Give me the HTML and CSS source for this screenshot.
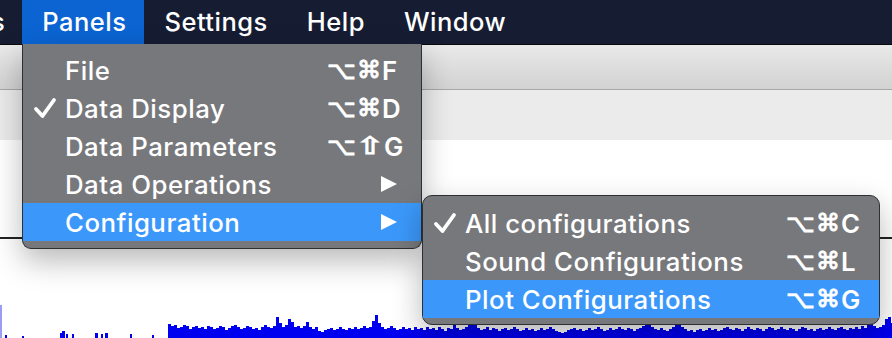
FILE: index.html
```html
<!DOCTYPE html>
<html>
<head>
<meta charset="utf-8">
<link rel="stylesheet" href="styles.css">
</head>
<body>
<div class="screen">
  <nav class="menubar">
    <span class="mb-item mb-cut">s</span>
    <span class="mb-item mb-active">Panels</span>
    <span class="mb-item">Settings</span>
    <span class="mb-item">Help</span>
    <span class="mb-item">Window</span>
  </nav>
  <div class="toolbar"></div>
  <div class="strip"></div>
  <div class="content">
    <div class="hline"></div>
    <div class="wave">
      <svg class="wave-svg" viewBox="0 298 892 40" width="892" height="40" preserveAspectRatio="none">
        <rect x="0" y="305" width="2" height="33" fill="#9a9cf5"/>
        <g fill="#0000f0">
          <rect x="5" y="335" width="2" height="3"/>
          <rect x="22" y="336" width="2" height="2"/>
          <rect x="60" y="333" width="2" height="5"/>
          <rect x="62" y="331" width="3" height="7"/>
          <rect x="66" y="334" width="2" height="4"/>
          <rect x="72" y="334" width="2" height="4"/>
          <rect x="95" y="333" width="3" height="5"/>
          <rect x="101" y="334" width="2" height="4"/>
          <rect x="105" y="333" width="3" height="5"/>
          <rect x="130" y="334" width="2" height="4"/>
          <rect x="152" y="335" width="2" height="3"/>
          <path d="M168 338 V324 H171 V326 H174 V325 H177 V328 H180 V327 H183 V325 H186 V326 H189 V329 H192 V327 H195 V326 H198 V328 H201 V327 H204 V329 H207 V326 H210 V327 H213 V329 H216 V328 H219 V326 H222 V327 H225 V330 H228 V328 H231 V326 H234 V325 H237 V327 H240 V329 H243 V328 H246 V326 H249 V327 H252 V329 H255 V328 H258 V330 H261 V327 H264 V325 H267 V327 H270 V328 H273 V326 H276 V317 H279 V323 H282 V327 H285 V325 H288 V319 H291 V322 H294 V327 H297 V326 H300 V328 H303 V326 H306 V322 H309 V327 H312 V329 H315 V327 H318 V331 H321 V332 H324 V330 H327 V329 H330 V328 H333 V330 H336 V329 H339 V327 H342 V329 H345 V330 H348 V328 H351 V329 H354 V327 H357 V329 H360 V328 H363 V326 H366 V328 H369 V327 H372 V321 H375 V315 H378 V323 H381 V327 H384 V329 H387 V328 H390 V326 H393 V328 H396 V330 H399 V329 H402 V327 H405 V329 H408 V328 H411 V330 H414 V327 H417 V329 H420 V328 H423 V330 H426 V327 H429 V329 H432 V328 H435 V330 H438 V327 H441 V329 H444 V331 H447 V328 H450 V329 H453 V325 H456 V328 H459 V330 H462 V329 H465 V327 H468 V323 H471 V322 H474 V325 H477 V328 H480 V330 H483 V329 H486 V327 H489 V330 H492 V328 H495 V329 H498 V331 H501 V329 H504 V328 H507 V330 H510 V329 H513 V327 H516 V329 H519 V331 H522 V330 H525 V328 H528 V330 H531 V329 H534 V331 H537 V330 H540 V328 H543 V330 H546 V329 H549 V327 H552 V329 H555 V331 H558 V332 H561 V333 H564 V332 H567 V330 H570 V329 H573 V328 H576 V330 H579 V329 H582 V331 H585 V330 H588 V328 H591 V330 H594 V329 H597 V327 H600 V329 H603 V331 H606 V330 H609 V328 H612 V330 H615 V329 H618 V327 H621 V329 H624 V330 H627 V328 H630 V329 H633 V331 H636 V329 H639 V328 H642 V326 H645 V325 H648 V323 H651 V327 H654 V329 H657 V330 H660 V328 H663 V330 H666 V331 H669 V329 H672 V327 H675 V324 H678 V323 H681 V327 H684 V329 H687 V331 H690 V330 H693 V332 H696 V330 H699 V329 H702 V331 H705 V330 H708 V328 H711 V330 H714 V329 H717 V331 H720 V330 H723 V328 H726 V327 H729 V329 H732 V330 H735 V328 H738 V329 H741 V331 H744 V329 H747 V327 H750 V329 H753 V330 H756 V328 H759 V329 H762 V331 H765 V329 H768 V327 H771 V328 H774 V330 H777 V329 H780 V327 H783 V329 H786 V330 H789 V328 H792 V329 H795 V331 H798 V329 H801 V327 H804 V328 H807 V330 H810 V329 H813 V331 H816 V329 H819 V328 H822 V330 H825 V329 H828 V327 H831 V329 H834 V330 H837 V328 H840 V327 H843 V329 H846 V330 H849 V328 H852 V329 H855 V327 H858 V329 H861 V326 H864 V328 H867 V325 H870 V322 H873 V326 H876 V328 H879 V327 H882 V325 H885 V319 H888 V317 H891 V323 H892 V338 Z"/>
        </g>
      </svg>
    </div>
  </div>

  <div class="menu menu-main">
    <div class="row"><span class="check"></span><span class="label">File</span><span class="key"><span class="sym opt">⌥</span><span class="sym cmd">⌘</span><span class="kl">F</span></span></div>
    <div class="row"><span class="check"><svg viewBox="0 0 24 22" width="24" height="22"><path d="M3 12 L9.5 19 L21 3" fill="none" stroke="#fff" stroke-width="3.8" stroke-linecap="round" stroke-linejoin="round"/></svg></span><span class="label">Data Display</span><span class="key"><span class="sym opt">⌥</span><span class="sym cmd">⌘</span><span class="kl">D</span></span></div>
    <div class="row"><span class="check"></span><span class="label">Data Parameters</span><span class="key"><span class="sym opt">⌥</span><span class="sym shift"><span class="shift-glyph">⇧</span></span><span class="kl">G</span></span></div>
    <div class="row"><span class="check"></span><span class="label">Data Operations</span><span class="arrow"></span></div>
    <div class="row row-hl"><span class="check"></span><span class="label">Configuration</span><span class="arrow"></span></div>
  </div>

  <div class="menu menu-sub">
    <div class="row"><span class="check"><svg viewBox="0 0 24 22" width="24" height="22"><path d="M3 12 L9.5 19 L21 3" fill="none" stroke="#fff" stroke-width="3.8" stroke-linecap="round" stroke-linejoin="round"/></svg></span><span class="label">All configurations</span><span class="key"><span class="sym opt">⌥</span><span class="sym cmd">⌘</span><span class="kl">C</span></span></div>
    <div class="row"><span class="check"></span><span class="label">Sound Configurations</span><span class="key"><span class="sym opt">⌥</span><span class="sym cmd">⌘</span><span class="kl">L</span></span></div>
    <div class="row row-hl"><span class="check"></span><span class="label">Plot Configurations</span><span class="key"><span class="sym opt">⌥</span><span class="sym cmd">⌘</span><span class="kl">G</span></span></div>
  </div>
</div>
</body>
</html>
```

FILE: styles.css
```css
html, body {
  margin: 0;
  padding: 0;
  width: 892px;
  height: 338px;
  overflow: hidden;
  background: #fff;
}
.screen {
  position: relative;
  width: 892px;
  height: 338px;
  display: flex;
  flex-direction: column;
  font-family: "Inter", "DejaVu Sans", sans-serif;
}
.menubar {
  height: 44px;
  flex: none;
  background: #161d33;
  display: flex;
  align-items: stretch;
  color: #fff;
  font-size: 25.5px;
  font-weight: 500;
  letter-spacing: 0.5px;
  line-height: 44px;
}
.mb-item {
  padding: 0 19px 0 20px;
}
.mb-cut {
  margin-left: -9px;
  padding: 0 17px 0 0;
}
.mb-active {
  background: #0b64d2;
  padding-right: 18px;
}
.toolbar {
  height: 44px;
  flex: none;
  border-top: 1px solid #0a0a0a;
  background: linear-gradient(#e9e9e9, #d2d2d2);
  border-bottom: 1px solid #a8a8a8;
}
.strip {
  height: 50px;
  flex: none;
  background: #ebebeb;
}
.content {
  flex: 1;
  display: flex;
  flex-direction: column;
  background: #fff;
}
.hline {
  margin-top: 97px;
  height: 2px;
  background: #222;
}
.wave {
  flex: 1;
  display: flex;
  align-items: flex-end;
}
.wave-svg {
  display: block;
}
.menu {
  position: absolute;
  box-sizing: border-box;
  background: #77787c;
  border: 1px solid #2e2f33;
  color: #fff;
  font-size: 25.8px;
  font-weight: 500;
  letter-spacing: 0.5px;
  box-shadow: 0 12px 30px rgba(0,0,0,0.28);
}
.menu-main {
  left: 22px;
  top: 44px;
  width: 400px;
  height: 205px;
  padding-top: 7px;
  border-top: none;
  border-radius: 0 0 9px 9px;
}
.menu-sub {
  left: 422px;
  top: 195px;
  width: 458px;
  height: 130px;
  padding-top: 8px;
  border-radius: 10px;
}
.row {
  height: 38px;
  display: flex;
  align-items: center;
  padding: 0 18px 0 10px;
}
.row-hl {
  background: #3b98fa;
}
.check {
  width: 32px;
  display: flex;
  align-items: center;
}
.check svg {
  display: block;
}
.label {
  flex: 1;
  white-space: nowrap;
}
.key {
  width: 76px;
  display: flex;
  align-items: center;
  white-space: nowrap;
  font-weight: 600;
}
.menu-sub .key {
  width: 75px;
}
.sym {
  font-family: "DejaVu Sans", sans-serif;
  font-weight: 400;
  letter-spacing: 0;
  -webkit-text-stroke: 0.9px #fff;
  line-height: 1;
  display: flex;
  justify-content: flex-start;
  overflow: visible;
}
.opt {
  width: 22px;
  margin-right: 8px;
  font-size: 25px;
}
.cmd {
  width: 20px;
  margin-right: 5px;
  font-size: 24px;
}
.shift {
  width: 20px;
  margin-left: 3px;
  margin-right: 4px;
  justify-content: center;
  font-size: 24px;
  -webkit-text-stroke: 1.1px #fff;
}
.shift-glyph {
  display: inline-block;
  transform: scaleX(1.35);
}
.kl {
  letter-spacing: 0;
}
.arrow {
  width: 0;
  height: 0;
  border-top: 8px solid transparent;
  border-bottom: 8px solid transparent;
  border-left: 16px solid #fff;
  margin-right: 6px;
}
```
